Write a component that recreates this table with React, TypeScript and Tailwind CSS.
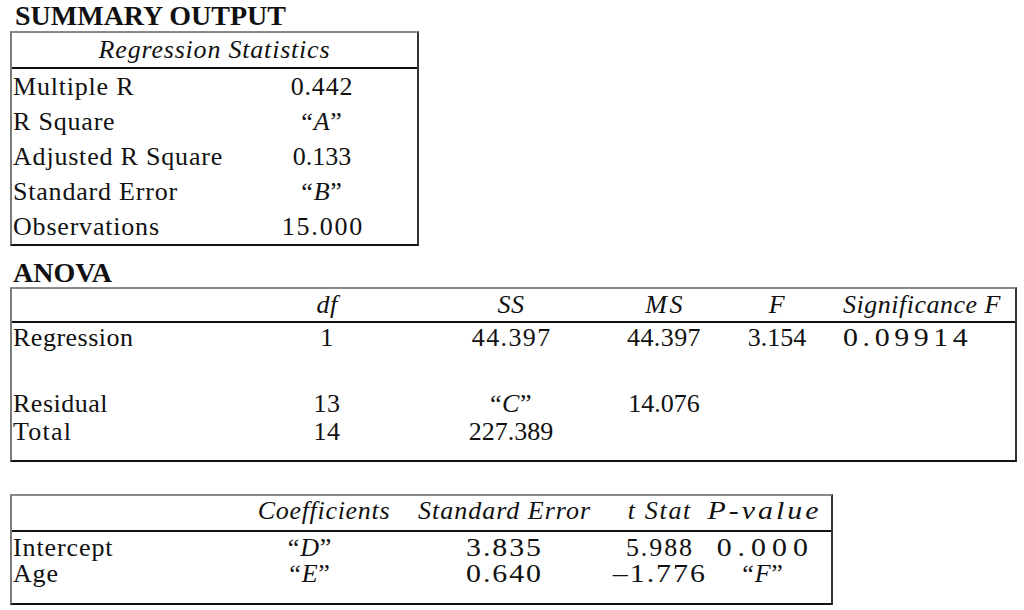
import React from "react";

type Cell = React.ReactNode;

const Q = ({ c }: { c: string }) => (
  <span>
    “<i>{c}</i>”
  </span>
);

// stretched text: the reference widens some cells with wider glyphs and extra spacing
const T = ({ s, children }: { s: string; children: React.ReactNode }) => <span className={s}>{children}</span>;

// one line of a statistics table; first cell is the row label
const Row = ({ cols, cells, className, last }: { cols: string; cells: Cell[]; className: string; last?: string }) => (
  <div className={`grid ${cols} ${className}`}>
    {cells.map((c, i) =>
      i === 0 ? (
        <div key={i} className="pl-[1px] whitespace-nowrap">
          {c}
        </div>
      ) : i === cells.length - 1 && last ? (
        <div key={i} className={`whitespace-nowrap ${last}`}>
          {c}
        </div>
      ) : (
        <div key={i} className="flex justify-center whitespace-nowrap">
          {c}
        </div>
      )
    )}
  </div>
);

const box = "border-2 border-t-[#8a8a8a] border-l-[#7a7a7a] border-r-[#333] border-b-[#111]";

export default function App() {
  const anovaCols = "grid-cols-[228px_174px_194px_112px_114px_1fr]";
  const coefCols = "grid-cols-[233px_150px_218px_92px_116px_1fr]";

  return (
    <div className="min-h-screen bg-white pl-[10px] text-[26px] text-[#111] font-['Liberation_Serif','Times_New_Roman',serif]">
      <h1 className="h-[31px] pt-[1px] pl-[5px] text-[28px] leading-[29px] font-bold">SUMMARY OUTPUT</h1>

      {/* --- Regression statistics --- */}
      <div className={`w-[409px] tracking-[0.8px] ${box}`}>
        <div className="h-[36px] border-b-2 border-[#111] text-center italic leading-[34px]">Regression Statistics</div>
        {[
          ["Multiple R", "0.442"],
          ["R Square", <Q c="A" />],
          ["Adjusted R Square", <T s="tracking-[0px]">0.133</T>],
          ["Standard Error", <Q c="B" />],
          ["Observations", <T s="tracking-[1.8px] mr-[-1.8px]">15.000</T>],
        ].map((r, i) => (
          <Row key={i} cols="grid-cols-[215px_1fr]" cells={r} className="h-[35px] leading-[35px]" />
        ))}
      </div>

      <h2 className="mt-[12px] h-[29px] pl-[3px] text-[28px] leading-[29px] font-bold">ANOVA</h2>

      {/* --- ANOVA --- */}
      <div className={`w-[1007px] pb-[14px] tracking-[0.5px] ${box}`}>
        <Row
          cols={anovaCols}
          className="h-[34px] border-b-2 border-[#111] italic leading-[32px]"
          last="pl-[9px]"
          cells={["", "df", "SS", <T s="tracking-[2.6px] mr-[-2.6px]">MS</T>, "F", "Significance F"]}
        />
        <Row
          cols={anovaCols}
          className="h-[30px] leading-[30px]"
          last="pl-[9px]"
          cells={[
            "Regression",
            "1",
            <T s="tracking-[1.4px] mr-[-1.4px]">44.397</T>,
            <T s="tracking-[0.4px]">44.397</T>,
            <T s="tracking-[0px]">3.154</T>,
            <T s="inline-block origin-left scale-x-[1.15] tracking-[4px]">0.09914</T>,
          ]}
        />
        <div className="h-[37px]" />
        <Row
          cols={anovaCols}
          className="h-[28px] leading-[28px]"
          cells={["Residual", "13", <Q c="C" />, <T s="tracking-[0px]">14.076</T>, "", ""]}
        />
        <Row
          cols={anovaCols}
          className="h-[28px] leading-[28px]"
          cells={[<T s="tracking-[1.2px]">Total</T>, "14", <T s="tracking-[0px]">227.389</T>, "", "", ""]}
        />
      </div>

      {/* --- Coefficients --- */}
      <div className={`mt-[32px] w-[823px] pb-[16px] tracking-[0.8px] ${box}`}>
        <Row
          cols={coefCols}
          className="h-[36px] border-b-2 border-[#111] italic leading-[29px]"
          cells={[
            "",
            <T s="pl-[8px] tracking-[0.7px]">Coefficients</T>,
            <T s="tracking-[1px] mr-[-1px]">Standard Error</T>,
            <T s="tracking-[1.7px] mr-[-1.7px]">t Stat</T>,
            <T s="inline-block scale-x-[1.15] tracking-[2.6px] mr-[-2.6px]">P-value</T>,
            "",
          ]}
        />
        <div className="pt-[3px]">
          <Row
            cols={coefCols}
            className="h-[26px] leading-[26px]"
            cells={[
              <T s="tracking-[0.9px]">Intercept</T>,
              <T s="pr-[20px]"><Q c="D" /></T>,
              <T s="inline-block scale-x-[1.15] tracking-[1.7px] mr-[-1.7px]">3.835</T>,
              <T s="tracking-[1.9px] mr-[-1.9px]">5.988</T>,
              <T s="inline-block scale-x-[1.15] tracking-[5.2px] mr-[-5.2px]">0.000</T>,
              "",
            ]}
          />
          <Row
            cols={coefCols}
            className="h-[26px] leading-[26px]"
            cells={[
              "Age",
              <T s="pr-[20px]"><Q c="E" /></T>,
              <T s="inline-block scale-x-[1.15] tracking-[1.7px] mr-[-1.7px]">0.640</T>,
              <T s="inline-block scale-x-[1.15] tracking-[1.7px] mr-[-1.7px]">–1.776</T>,
              <Q c="F" />,
              "",
            ]}
          />
        </div>
      </div>
    </div>
  );
}
